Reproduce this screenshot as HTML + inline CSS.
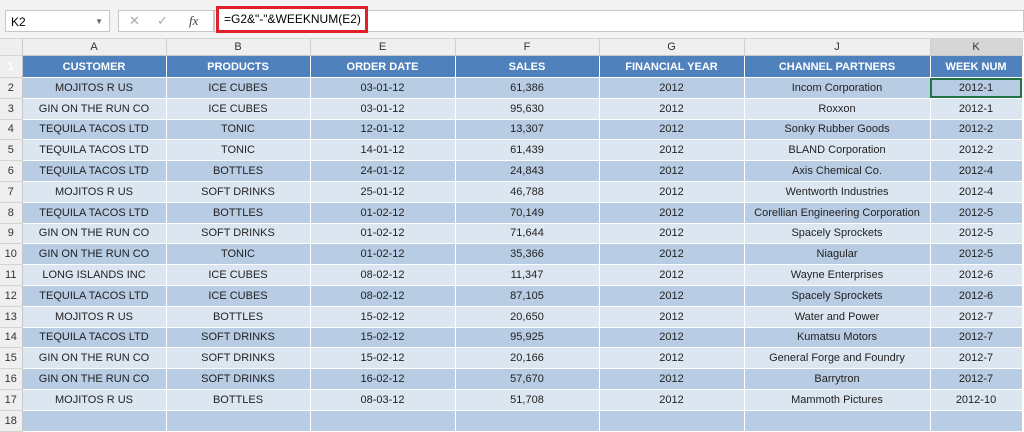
<!DOCTYPE html>
<html><head><style>
body{margin:0;width:1024px;height:412px;overflow:hidden;background:#fff;font-family:"Liberation Sans",sans-serif;position:relative}
.top{position:absolute;left:0;top:0;width:1024px;height:38px;background:#f3f3f3;border-bottom:1px solid #d4d4d4}
.nb{position:absolute;left:5px;top:10px;width:105px;height:22px;background:#fff;border:1px solid #c6c6c6;font-size:12px;line-height:22px;padding-left:5px;box-sizing:border-box}
.nb span{position:absolute;right:6px;top:0;font-size:8px;color:#666}
.ic{position:absolute;left:118px;top:10px;width:96px;height:22px;background:#fff;border:1px solid #c6c6c6;box-sizing:border-box;color:#aaa;font-size:13px;line-height:20px}
.fb{position:absolute;left:214px;top:10px;width:810px;height:22px;background:#fff;border:1px solid #c6c6c6;box-sizing:border-box}
.red{position:absolute;left:216px;top:6px;width:152px;height:27px;border:3px solid #e0202a;box-sizing:border-box;font-size:12px;line-height:21px;padding-left:5px;background:#fff;white-space:nowrap;overflow:hidden}
table{position:absolute;left:0;top:39px;border-collapse:collapse;table-layout:fixed;font-size:11px;color:#222}
td{padding:0;text-align:center;white-space:nowrap;overflow:hidden}
tr.ch td{height:16px;background:#efefef;color:#333;border-right:1px solid #d0d0d0;border-bottom:1px solid #c8c8c8;font-size:11px}
tr.d td{height:19.8px;border:1px solid #fff;border-width:1px 1px 0 1px}
td.rh{background:#efefef !important;color:#333;border:none !important;border-bottom:1px solid #d4d4d4 !important;border-right:1px solid #c8c8c8 !important;font-size:11px}
tr.h td{background:#4f81bd;color:#fff;font-weight:bold;height:21px;border:1px solid #fff;border-width:0 1px 0 1px}
tr.e td{background:#b8cce4}
tr.o td{background:#dce6f1}
.sel{outline:2px solid #217346;outline-offset:-2px}
</style></head><body>
<div class="top"></div>
<div class="nb">K2<span>▼</span></div>
<div class="ic"><span style="position:absolute;left:10px">✕</span><span style="position:absolute;left:38px">✓</span><span style="position:absolute;left:70px;font-style:italic;color:#444;font-family:'Liberation Serif',serif">fx</span></div>
<div class="fb"></div>
<div class="red">=G2&amp;"-"&amp;WEEKNUM(E2)</div>
<table>
<colgroup><col style="width:22px"><col style="width:144px"><col style="width:144px"><col style="width:145px"><col style="width:144px"><col style="width:145px"><col style="width:186px"><col style="width:92px"></colgroup>
<tr class="ch"><td class="rh" style="border-bottom:1px solid #c8c8c8"></td><td>A</td><td>B</td><td>E</td><td>F</td><td>G</td><td>J</td><td style="background:#d6d6d6">K</td></tr>
<tr class="h"><td class="rh">1</td><td>CUSTOMER</td><td>PRODUCTS</td><td>ORDER DATE</td><td>SALES</td><td>FINANCIAL YEAR</td><td>CHANNEL PARTNERS</td><td>WEEK NUM</td></tr>
<tr class="d e"><td class="rh">2</td><td>MOJITOS R US</td><td>ICE CUBES</td><td>03-01-12</td><td>61,386</td><td>2012</td><td>Incom Corporation</td><td class="sel">2012-1</td></tr>
<tr class="d o"><td class="rh">3</td><td>GIN ON THE RUN CO</td><td>ICE CUBES</td><td>03-01-12</td><td>95,630</td><td>2012</td><td>Roxxon</td><td>2012-1</td></tr>
<tr class="d e"><td class="rh">4</td><td>TEQUILA TACOS LTD</td><td>TONIC</td><td>12-01-12</td><td>13,307</td><td>2012</td><td>Sonky Rubber Goods</td><td>2012-2</td></tr>
<tr class="d o"><td class="rh">5</td><td>TEQUILA TACOS LTD</td><td>TONIC</td><td>14-01-12</td><td>61,439</td><td>2012</td><td>BLAND Corporation</td><td>2012-2</td></tr>
<tr class="d e"><td class="rh">6</td><td>TEQUILA TACOS LTD</td><td>BOTTLES</td><td>24-01-12</td><td>24,843</td><td>2012</td><td>Axis Chemical Co.</td><td>2012-4</td></tr>
<tr class="d o"><td class="rh">7</td><td>MOJITOS R US</td><td>SOFT DRINKS</td><td>25-01-12</td><td>46,788</td><td>2012</td><td>Wentworth Industries</td><td>2012-4</td></tr>
<tr class="d e"><td class="rh">8</td><td>TEQUILA TACOS LTD</td><td>BOTTLES</td><td>01-02-12</td><td>70,149</td><td>2012</td><td>Corellian Engineering Corporation</td><td>2012-5</td></tr>
<tr class="d o"><td class="rh">9</td><td>GIN ON THE RUN CO</td><td>SOFT DRINKS</td><td>01-02-12</td><td>71,644</td><td>2012</td><td>Spacely Sprockets</td><td>2012-5</td></tr>
<tr class="d e"><td class="rh">10</td><td>GIN ON THE RUN CO</td><td>TONIC</td><td>01-02-12</td><td>35,366</td><td>2012</td><td>Niagular</td><td>2012-5</td></tr>
<tr class="d o"><td class="rh">11</td><td>LONG ISLANDS INC</td><td>ICE CUBES</td><td>08-02-12</td><td>11,347</td><td>2012</td><td>Wayne Enterprises</td><td>2012-6</td></tr>
<tr class="d e"><td class="rh">12</td><td>TEQUILA TACOS LTD</td><td>ICE CUBES</td><td>08-02-12</td><td>87,105</td><td>2012</td><td>Spacely Sprockets</td><td>2012-6</td></tr>
<tr class="d o"><td class="rh">13</td><td>MOJITOS R US</td><td>BOTTLES</td><td>15-02-12</td><td>20,650</td><td>2012</td><td>Water and Power</td><td>2012-7</td></tr>
<tr class="d e"><td class="rh">14</td><td>TEQUILA TACOS LTD</td><td>SOFT DRINKS</td><td>15-02-12</td><td>95,925</td><td>2012</td><td>Kumatsu Motors</td><td>2012-7</td></tr>
<tr class="d o"><td class="rh">15</td><td>GIN ON THE RUN CO</td><td>SOFT DRINKS</td><td>15-02-12</td><td>20,166</td><td>2012</td><td>General Forge and Foundry</td><td>2012-7</td></tr>
<tr class="d e"><td class="rh">16</td><td>GIN ON THE RUN CO</td><td>SOFT DRINKS</td><td>16-02-12</td><td>57,670</td><td>2012</td><td>Barrytron</td><td>2012-7</td></tr>
<tr class="d o"><td class="rh">17</td><td>MOJITOS R US</td><td>BOTTLES</td><td>08-03-12</td><td>51,708</td><td>2012</td><td>Mammoth Pictures</td><td>2012-10</td></tr>
<tr class="d e"><td class="rh">18</td><td></td><td></td><td></td><td></td><td></td><td></td><td></td></tr>
</table>
</body></html>
